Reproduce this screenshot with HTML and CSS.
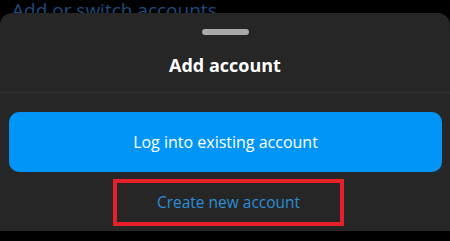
FILE: index.html
```html
<!DOCTYPE html>
<html lang="en">
  <head>
    <meta charset="UTF-8" />
    <meta name="viewport" content="width=device-width, initial-scale=1.0" />
    <title>Add account</title>
    <link rel="stylesheet" href="styles.css">
  </head>
  <body>
    <div class="backdrop">
      <span class="backdrop-title">Add or switch accounts</span>
    </div>

    <div class="sheet">
      <div class="handle"></div>
      <div class="sheet-title">Add account</div>
      <div class="divider"></div>
      <button class="login-btn">Log into existing account</button>
      <div class="create-row">
        <div class="create-box">Create new account</div>
      </div>
    </div>
  </body>
</html>
```

FILE: styles.css
```css
html,
body {
  margin: 0;
  padding: 0;
}
body {
  background-color: #000;
  width: 450px;
  height: 241px;
  overflow: hidden;
  font-family: "Open Sans", "Noto Sans", sans-serif;
}
.backdrop {
  height: 13px;
  overflow: hidden;
  padding-left: 12px;
}
.backdrop-title {
  display: block;
  margin-top: -2px;
  font-size: 19px;
  line-height: 24px;
  color: #1b4c7c;
}
.sheet {
  background-color: #262626;
  border-radius: 12px 12px 0 0;
  height: 218px;
  display: flex;
  flex-direction: column;
}
.sheet > * {
  flex-shrink: 0;
}
.handle {
  width: 47px;
  height: 6px;
  border-radius: 3px;
  background-color: #a9a9a9;
  margin: 16px auto 0;
}
.sheet-title {
  color: #fff;
  font-weight: 700;
  font-size: 18px;
  line-height: 28px;
  text-align: center;
  margin-top: 16px;
  height: 41px;
}
.divider {
  height: 1px;
  background-color: #363636;
}
.login-btn {
  margin: 19px 8px 0 9px;
  height: 60px;
  border: none;
  border-radius: 10px;
  background-color: #0095f6;
  color: #fff;
  font-family: inherit;
  font-size: 16px;
  padding: 0;
}
.create-row {
  padding-left: 113px;
  margin-top: 7px;
}
.create-box {
  width: 223px;
  height: 39px;
  border: 4px solid #e5202b;
  color: #2a8ed6;
  font-size: 15.5px;
  line-height: 39px;
  text-align: center;
}
```
